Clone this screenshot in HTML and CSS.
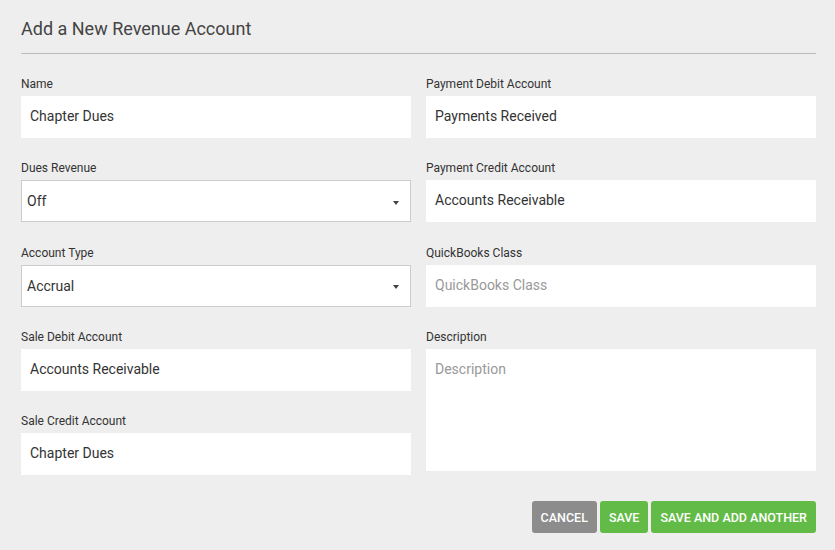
FILE: index.html
```html
<!DOCTYPE html>
<html>
<head>
<meta charset="utf-8">
<link rel="stylesheet" href="styles.css">
</head>
<body>
<div class="page">
  <h1 class="title">Add a New Revenue Account</h1>
  <div class="rule"></div>
  <div class="grid">
    <div class="col">
      <div class="field">
        <div class="label">Name</div>
        <div class="input">Chapter Dues</div>
      </div>
      <div class="field">
        <div class="label">Dues Revenue</div>
        <div class="select"><span>Off</span><span class="caret"></span></div>
      </div>
      <div class="field">
        <div class="label">Account Type</div>
        <div class="select"><span>Accrual</span><span class="caret"></span></div>
      </div>
      <div class="field">
        <div class="label">Sale Debit Account</div>
        <div class="input">Accounts Receivable</div>
      </div>
      <div class="field">
        <div class="label">Sale Credit Account</div>
        <div class="input">Chapter Dues</div>
      </div>
    </div>
    <div class="col">
      <div class="field">
        <div class="label">Payment Debit Account</div>
        <div class="input">Payments Received</div>
      </div>
      <div class="field">
        <div class="label">Payment Credit Account</div>
        <div class="input">Accounts Receivable</div>
      </div>
      <div class="field">
        <div class="label">QuickBooks Class</div>
        <div class="input placeholder">QuickBooks Class</div>
      </div>
      <div class="field">
        <div class="label">Description</div>
        <div class="textarea placeholder">Description</div>
      </div>
    </div>
  </div>
  <div class="actions">
    <button class="btn btn-cancel">CANCEL</button>
    <button class="btn btn-save">SAVE</button>
    <button class="btn btn-save">SAVE AND ADD ANOTHER</button>
  </div>
</div>
</body>
</html>
```
FILE: styles.css
```css
html, body {
  margin: 0;
  padding: 0;
  background: #eeeeee;
  font-family: Roboto, "Liberation Sans", sans-serif;
  color: #333;
}
.page {
  padding: 18px 19px 0 21px;
}
.title {
  margin: 0;
  font-size: 18px;
  line-height: 22px;
  font-weight: 400;
  color: #444;
}
.rule {
  height: 1px;
  background: #bbbbbb;
  margin-top: 13px;
  margin-bottom: 23px;
}
.grid {
  display: grid;
  grid-template-columns: 390px 390px;
  column-gap: 15px;
}
.col {
  display: flex;
  flex-direction: column;
}
.field {
  margin-bottom: 23.25px;
}
.label {
  font-size: 12px;
  line-height: 14px;
  color: #333;
  margin-bottom: 5px;
}
.input, .select, .textarea {
  box-sizing: border-box;
  background: #fff;
  height: 42px;
  font-size: 14px;
  line-height: 41px;
  padding-left: 9px;
  color: #333;
}
.select {
  border: 1px solid #cccccc;
  line-height: 40px;
  padding-left: 5px;
  padding-right: 11px;
  display: flex;
  justify-content: space-between;
  align-items: center;
}
.caret {
  width: 0;
  height: 0;
  border-left: 3.5px solid transparent;
  border-right: 3.5px solid transparent;
  border-top: 4px solid #444;
  margin-top: 3px;
}
.textarea {
  height: 122px;
  line-height: 20px;
  padding-top: 10px;
}
.placeholder {
  color: #999;
}
.actions {
  display: flex;
  justify-content: flex-end;
  gap: 3px;
  margin-top: 3px;
}
.btn {
  border: none;
  border-radius: 3px;
  height: 32px;
  padding: 0 9px;
  font-family: Roboto, "Liberation Sans", sans-serif;
  font-size: 12.5px;
  font-weight: 500;
  color: #fff;
}
.btn-cancel {
  background: #8c8c8c;
}
.btn-save {
  background: #62bb46;
}
```
